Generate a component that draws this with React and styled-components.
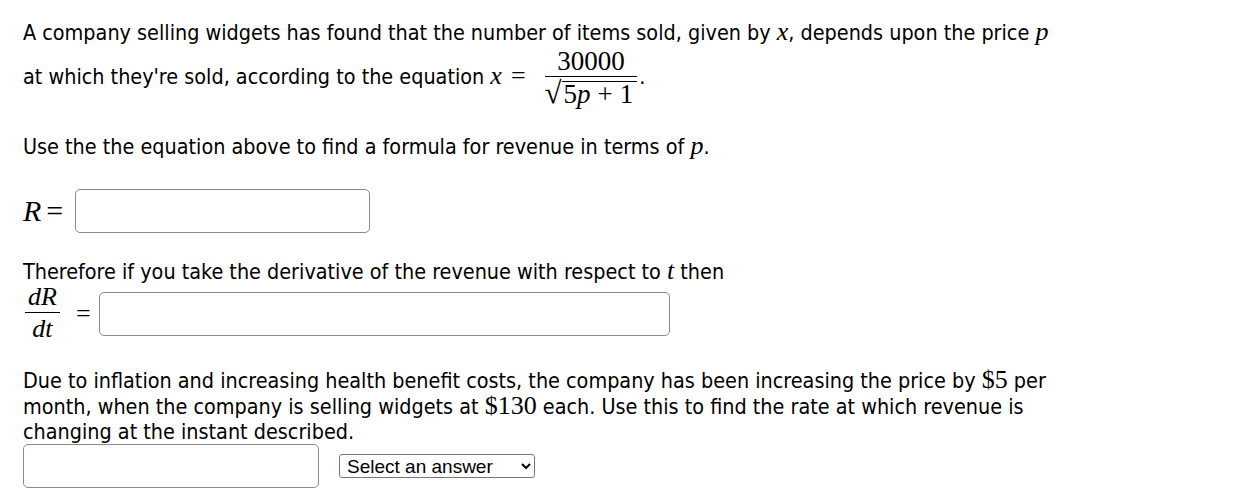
import React from 'react';
import styled, { createGlobalStyle } from 'styled-components';

const Global = createGlobalStyle`
  body {
    margin: 0;
    background: #fff;
    color: #000;
    font-family: "DejaVu Sans Condensed", "DejaVu Sans", sans-serif;
    font-size: 21.4px;
  }
`;

const Page = styled.div`
  padding: 18px 22px 0 23px;
  width: 1100px;
`;

const Para = styled.p`
  margin: ${({ $mt }) => $mt || 0}px 0 0 0;
  line-height: ${({ $lh }) => $lh || 25}px;
  white-space: nowrap;
`;

const M = styled.span`
  font-family: "Liberation Serif", "DejaVu Serif", serif;
  font-style: ${({ $up }) => ($up ? 'normal' : 'italic')};
  font-size: 26px;
  line-height: 1;
  margin: 0 ${({ $sp }) => $sp || 0}px;
`;

const Frac = styled.span`
  display: inline-flex;
  flex-direction: column;
  align-items: center;
  vertical-align: middle;
  margin: 0 2px 0 ${({ $ml }) => $ml || 2}px;
  font-family: "Liberation Serif", "DejaVu Serif", serif;
  font-size: ${({ $fs }) => $fs || 27}px;
`;

const Num = styled.span`
  padding: 0 ${({ $pad }) => ($pad === undefined ? 8 : $pad)}px 2px;
  border-bottom: 1.5px solid #000;
  text-align: center;
  line-height: 26px;
  align-self: stretch;
`;

const Den = styled.span`
  padding-top: 2px;
  line-height: 28px;
`;

const Sqrt = styled.span`
  display: inline-flex;
  align-items: flex-end;
`;

const Radical = styled.span`
  font-size: 31px;
  line-height: 28px;
`;

const Radicand = styled.span`
  display: inline-flex;
  align-items: baseline;
  border-top: 1.5px solid #000;
  line-height: 25px;
  padding: 0 4px 0 2px;
`;

const Op = styled.span`
  display: inline-block;
  margin: 0 7px;
`;

const Row = styled.div`
  display: flex;
  align-items: center;
  gap: ${({ $gap }) => $gap || 0}px;
  margin-top: ${({ $mt }) => $mt || 0}px;
`;

const Label = styled.span`
  font-family: "Liberation Serif", "DejaVu Serif", serif;
  font-size: ${({ $fs }) => $fs || 26}px;
  display: inline-flex;
  align-items: center;
  gap: ${({ $gap }) => $gap || 6}px;
`;

const Input = styled.input`
  box-sizing: border-box;
  width: ${({ $w }) => $w}px;
  height: 44px;
  border: 1px solid #8a8a8a;
  border-radius: 5px;
  background: #fff;
  font-size: 18px;
  padding: 4px 8px;
`;

const Select = styled.select`
  box-sizing: border-box;
  width: 196px;
  height: 24px;
  border: 1px solid #767676;
  border-radius: 3px;
  background: #fff;
  font-family: "Liberation Sans", Arial, sans-serif;
  font-size: 19px;
  color: #000;
  padding: 0 3px;
`;

export default function App() {
  return (
    <Page>
      <Global />
      <Para $lh={30}>
        A company selling widgets has found that the number of items sold, given by <M>x</M>, depends upon the price <M>p</M>
      </Para>
      <Para>
        at which they're sold, according to the equation <M>x</M><M $up $sp={9}>=</M>
        <Frac $ml={10}>
          <Num $pad={0}>30000</Num>
          <Den>
            <Sqrt>
              <Radical>√</Radical>
              <Radicand>5<i>p</i><Op>+</Op>1</Radicand>
            </Sqrt>
          </Den>
        </Frac>
        .
      </Para>
      <Para $mt={25}>
        Use the the equation above to find a formula for revenue in terms of <M>p</M>.
      </Para>
      <Row $mt={30} $gap={12}>
        <Label $fs={30} $gap={5}><i>R</i>=</Label>
        <Input $w={295} />
      </Row>
      <Para $mt={25}>
        Therefore if you take the derivative of the revenue with respect to <M>t</M> then
      </Para>
      <Row $gap={8}>
        <Label $gap={14}>
          <Frac $fs={26}>
            <Num $pad={3}><i>dR</i></Num>
            <Den><i>dt</i></Den>
          </Frac>
          =
        </Label>
        <Input $w={571} />
      </Row>
      <Para $mt={24}>
        Due to inflation and increasing health benefit costs, the company has been increasing the price by <M $up>$5</M> per
        <br />
        month, when the company is selling widgets at <M $up>$130</M> each. Use this to find the rate at which revenue is
        <br />
        changing at the instant described.
      </Para>
      <Row $gap={20}>
        <Input $w={296} />
        <Select defaultValue="">
          <option value="">Select an answer</option>
        </Select>
      </Row>
    </Page>
  );
}
